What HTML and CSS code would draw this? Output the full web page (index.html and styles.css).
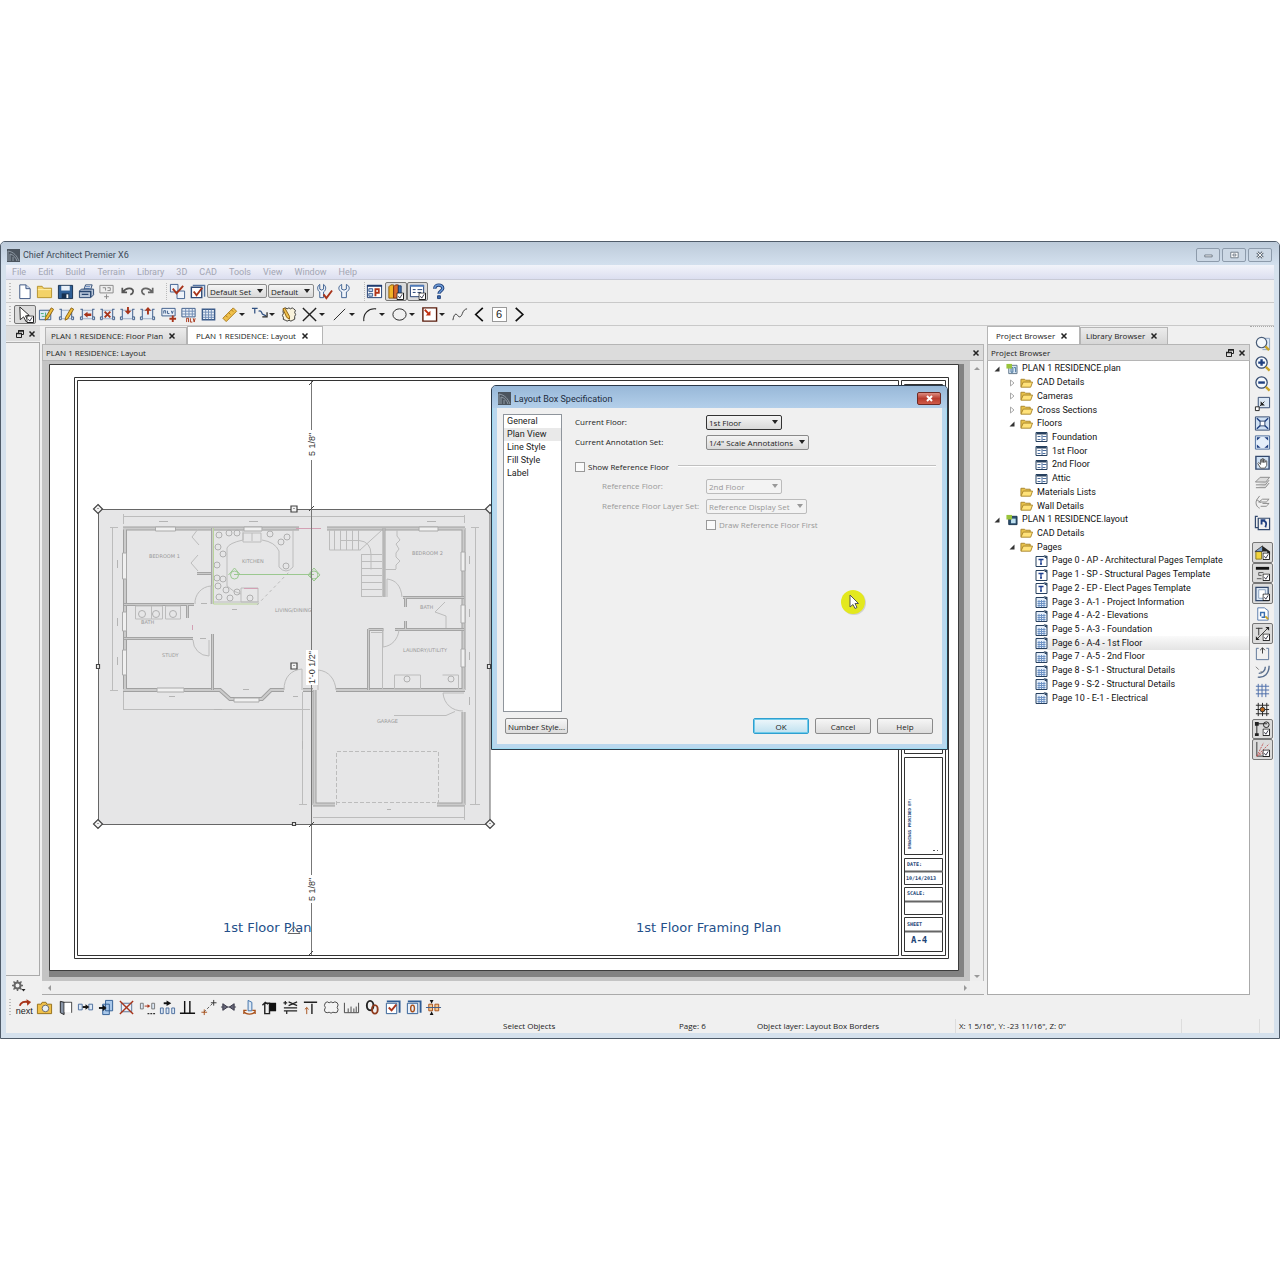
FILE: index.html
```html
<!DOCTYPE html>
<html lang="en">
<head>
<meta charset="utf-8">
<title>Chief Architect Premier X6</title>
<link rel="stylesheet" href="styles.css">
</head>
<body>
<svg class="defs" aria-hidden="true">
  <symbol id="folder" viewBox="0 0 14 12"><path d="M1 10V2h4l1 1h5v2" fill="#e8c24a" stroke="#a8842a"/><path d="M1 10.500l2.500-5.500h10l-2 5.500z" fill="#ffe27a" stroke="#a8842a"/></symbol>
  <symbol id="plan" viewBox="0 0 12 12"><path d="M.5 1.500h11v9H.5z" fill="#fff" stroke="#27405f"/><path d="M1 2.500h10" stroke="#27405f" stroke-width="2"/><path d="M2 5.500h3M2 8.500h3M6.500 4v6M7 5.500h4M7 8.500h3" stroke="#4a6c9c"/></symbol>
  <symbol id="sheet" viewBox="0 0 12 12"><path d="M.5 1.500h8l3 2v8H.5z" fill="#e4eefa" stroke="#27405f"/><path d="M8 0l4 4V1z" fill="#27405f"/><path d="M2 5.500h8M2 7.500h8M2 9.500h8M3.500 4v7M6 4v7M8.500 4v7" stroke="#6f93c4"/></symbol>
  <symbol id="tmpl" viewBox="0 0 12 12"><path d="M.5 1.500h8l3 2v8H.5z" fill="#fff" stroke="#27405f"/><path d="M8 0l4 4V1z" fill="#27405f"/><path d="M3 4.500h5M5.500 4v5M4.500 9h2" stroke="#1d3f8f" stroke-width="1.300"/></symbol>
  <symbol id="file" viewBox="0 0 13 13"><path d="M3.500 2.500h9v9h-9z" fill="#dbe8f5" stroke="#5b7186"/><path d="M6 5h2v5H6zM9 5h2v5" fill="none" stroke="#3d6d96"/><path d="M1 1h6v5H1z" fill="#9ac43c"/></symbol>
  <symbol id="filed" viewBox="0 0 13 13"><path d="M3.500 2.500h9v9h-9z" fill="#2c5170" stroke="#18324c"/><path d="M6 5h5v5H6z" fill="#bfe0f0"/><path d="M1 1h6v5H1z" fill="#9ac43c"/></symbol>
  <symbol id="open" viewBox="0 0 8 8"><path d="M6.500 1.500v5h-5z" fill="#333"/></symbol>
  <symbol id="shut" viewBox="0 0 8 8"><path d="M2.500 1l3.500 3-3.500 3z" fill="#fff" stroke="#aaa"/></symbol>
  <symbol id="x" viewBox="0 0 8 8"><path d="M1.500 1.500l5 5M6.500 1.500l-5 5" stroke="#222" stroke-width="1.500"/></symbol>
  <symbol id="restore" viewBox="0 0 8 8"><path d="M2.500 3V.5h5v4H6M.5 3.500h5v4h-5z" fill="none" stroke="#222"/><path d="M2 1h6M0 3.500h6" stroke="#222" stroke-width="1.500"/></symbol>
  <symbol id="logo" viewBox="0 0 13 13"><path d="M0 0h13v13H0z" fill="#4b545e"/><path d="M1 12V2c6 1 9 5 11 10M3 12V5c4 1 6 4 7 7M6 12V8" fill="none" stroke="#8f9aa5"/></symbol>
  <symbol id="scroll" viewBox="0 0 18 18"><path d="M3.500 4.500h11v9h-11z" fill="#e4ecf6"/><path d="M4 4.500h10M4 13.500h10" stroke="#9aabc4"/><path d="M3.500 3v11.500h-2v-3h2M14.500 3v11.500h2v-3h-2M3.500 3.500h-2M14.500 3.500h2" fill="none" stroke="#3b5b89"/></symbol>
  <symbol id="tick" viewBox="0 0 8 8"><path d="M.5.500h7v7h-7z" fill="#fff" stroke="#111"/><path d="M2 4l1.500 2L6 2" fill="none" stroke="#334"/></symbol>
</svg>

<main class="window">
  <header class="titlebar">
    <svg class="logo"><use href="#logo"/></svg><h1>Chief Architect Premier X6</h1>
    <div class="winbtns">
      <button aria-label="Minimize"><svg viewBox="0 0 22 13"><path d="M7.500 6.500h8v2h-8z" fill="#fff" stroke="#6b7682"/></svg></button>
      <button aria-label="Maximize"><svg viewBox="0 0 22 13"><path d="M7.500 3.500h8v6h-8z" fill="#fff" stroke="#6b7682"/><path d="M10 5.500h3v2h-3z" fill="none" stroke="#6b7682"/></svg></button>
      <button aria-label="Close"><svg viewBox="0 0 22 13"><path d="M8 3.500l6 6M14 3.500l-6 6" stroke="#6b7682" stroke-width="3"/><path d="M8 3.500l6 6M14 3.500l-6 6" stroke="#fff"/></svg></button>
    </div>
  </header>
  <div class="body">
  <nav class="menu"><a href="#">File</a><a href="#">Edit</a><a href="#">Build</a><a href="#">Terrain</a><a href="#">Library</a><a href="#">3D</a><a href="#">CAD</a><a href="#">Tools</a><a href="#">View</a><a href="#">Window</a><a href="#">Help</a></nav>

  <div class="bar bar1">
    <div class="icons seven">
      <button aria-label="New"><svg viewBox="0 0 18 18"><path d="M4 2h6.500L15 6v10.500H4z" fill="#fff" stroke="#39537f"/><path d="M10.500 2v4H15" fill="#cfdcee" stroke="#39537f"/></svg></button>
      <button aria-label="Open"><svg viewBox="0 0 18 18"><path d="M1.500 3.500h5l1.500 2h8.500v10h-15z" fill="#f3d267" stroke="#b5902c"/><path d="M2 7h14" stroke="#fff0b0"/></svg></button>
      <button aria-label="Save"><svg viewBox="0 0 18 18"><path d="M1.500 2.500h15v14h-15z" fill="#2f5f96" stroke="#17304f"/><path d="M4.500 3h9v5h-9z" fill="#e9f0f8"/><path d="M5 11h8v5H5z" fill="#17304f"/><path d="M10 12h2v4h-2z" fill="#fff"/></svg></button>
      <button aria-label="Print"><svg viewBox="0 0 18 18"><path d="M6 8l2-6h7l-2 6" fill="#fff" stroke="#27456f"/><path d="M8 4h5M7.500 6h5" stroke="#3a66a8"/><path d="M1.500 8.500l2-2h13v6l-3 3h-12z" fill="#b8c6d8" stroke="#27456f"/><path d="M1.500 9h12v6M4 12h7" fill="none" stroke="#27456f" stroke-width="1.500"/></svg></button>
      <button aria-label="Send to layout"><svg viewBox="0 0 18 18"><path d="M2 2.500h14v8H2z" fill="#eee" stroke="#888"/><path d="M5 5h3v3M10 5h3v3h-3M9 12v5M6.500 14.500h5" fill="none" stroke="#888"/></svg></button>
      <button aria-label="Undo"><svg viewBox="0 0 18 18"><path d="M3.500 5v5h5M4.500 9C8 4 15 5 15 9c0 1.500-1 2.500-3 3.500" fill="none" stroke="#555" stroke-width="1.800"/></svg></button>
      <button aria-label="Redo"><svg viewBox="0 0 18 18"><path d="M14.500 5v5h-5M13.500 9C10 4 3 5 3 9c0 1.500 1 2.500 3 3.500" fill="none" stroke="#666" stroke-width="1.800"/></svg></button>
    </div>
    <div class="icons two">
      <button aria-label="Defaults"><svg viewBox="0 0 18 18"><path d="M1.500 1.500h8v8h-8zM8.500 8.500h8v8h-8z" fill="#eef3fa" stroke="#3f5f8f"/><path d="M4 6l4 5 7-8" fill="none" stroke="#a8341a" stroke-width="2"/></svg></button>
      <button aria-label="Preferences"><svg viewBox="0 0 18 18"><path d="M4 2.500h12.500v12" fill="none" stroke="#5474a3" stroke-width="1.500"/><path d="M2.500 4.500h11v11h-11z" fill="#fff" stroke="#2f4a77" stroke-width="1.500"/><path d="M5 9l3 4 6-8" fill="none" stroke="#a8341a" stroke-width="2"/></svg></button>
    </div>
    <span class="sel w60"><select aria-label="Default set"><option>Default Set</option></select></span>
    <span class="sel w46"><select aria-label="Layer set"><option>Default</option></select></span>
    <div class="icons two">
      <button aria-label="Edit tools"><svg viewBox="0 0 18 18"><path d="M4 1.500v5l2 1 2-1v-5c3 2 3 6 0 8v6H4v-6C1 7.500 1 3.500 4 1.500z" fill="#eef3fa" stroke="#3b5f8f"/><path d="M8 12l3 4 6-8" fill="none" stroke="#a8341a" stroke-width="2"/></svg></button>
      <button aria-label="Tools"><svg viewBox="0 0 18 18"><path d="M6 1.500v5l2.500 1 2.500-1v-5c4 2 4 6 0 8v6H6v-6C2 7.500 2 3.500 6 1.500z" fill="#eef3fa" stroke="#3b5f8f"/></svg></button>
    </div>
    <div class="icons four">
      <button aria-label="Project browser"><svg viewBox="0 0 18 18"><path d="M1.500 2.500h15v13h-15z" fill="#fff" stroke="#1f3b6e"/><path d="M1 3h16" stroke="#1f3b6e" stroke-width="2"/><path d="M3 6h4v3H3zM3 11h4v3H3z" fill="#c4d5ea" stroke="#3d5f94"/><path d="M10 14V6.500h3.500v4H10" fill="none" stroke="#b03418" stroke-width="2"/></svg></button>
      <button class="on" aria-label="Library browser"><svg viewBox="0 0 18 18"><path d="M2 4l2-2h3v14H2z" fill="#f0b428" stroke="#8a5a10"/><path d="M7 4l2-2h3v14H7z" fill="#d9692a" stroke="#7a2f10"/><path d="M12 3h3v13h-3z" fill="#4676b5" stroke="#1d3c6b"/><use href="#tick" x="10" y="10" width="8" height="8"/></svg></button>
      <button class="on" aria-label="Active view"><svg viewBox="0 0 18 18"><path d="M1.500 2.500h14v12h-14z" fill="#fff" stroke="#1f3b6e"/><path d="M1 3h15" stroke="#4f7ab8" stroke-width="2"/><path d="M4 7h3M4 10h3M9 7h5M9 10h4" stroke="#1f3b6e"/><use href="#tick" x="10" y="10" width="8" height="8"/></svg></button>
      <button aria-label="Help"><svg viewBox="0 0 18 18"><path d="M5 6c0-5 8.500-5 8.500-.5 0 3-4 3-4 6" fill="none" stroke="#203f78" stroke-width="3.500"/><path d="M5 6c0-5 8.500-5 8.500-.5 0 3-4 3-4 6" fill="none" stroke="#6d9bd8" stroke-width="1.500"/><path d="M8 13.500h3v3H8z" fill="#3f6fb0" stroke="#203f78"/></svg></button>
    </div>
  </div>

  <div class="bar bar2">
    <div class="icons ten">
      <button class="on" aria-label="Select objects"><svg viewBox="0 0 18 18"><path d="M3 1l10 9-4 .5 2.500 5-2 1-2.500-5-3.500 3z" fill="#fff" stroke="#222"/><use href="#tick" x="10" y="10" width="8" height="8"/></svg></button>
      <button aria-label="Edit layout lines"><svg viewBox="0 0 18 18"><path d="M1.500 4.500h12v10h-12z" fill="#dce8f5" stroke="#3b5b89"/><path d="M3 8h3M4 11h3M8 7v5" stroke="#4a7"/><path d="M8 12l6-10 2.500 1.500-6 10-3 1.500z" fill="#f0bf3c" stroke="#8a6010"/></svg></button>
      <button aria-label="Edit layout page"><svg viewBox="0 0 18 18"><use href="#scroll"/><path d="M8 12l6-10 2.500 1.500-6 10-3 1.500z" fill="#f0bf3c" stroke="#8a6010"/></svg></button>
      <button aria-label="Previous sheet"><svg viewBox="0 0 18 18"><use href="#scroll"/><path d="M5 9l4-3v2h4v2.500H9v2z" fill="#a8341a"/></svg></button>
      <button aria-label="Delete sheet"><svg viewBox="0 0 18 18"><use href="#scroll"/><path d="M6 6l6 6M12 6l-6 6" stroke="#a8341a" stroke-width="2"/></svg></button>
      <button aria-label="Import sheet"><svg viewBox="0 0 18 18"><use href="#scroll"/><path d="M9.500 1v5" stroke="#a8341a" stroke-width="2"/><path d="M6 5h7l-3.500 4z" fill="#a8341a"/></svg></button>
      <button aria-label="Export sheet"><svg viewBox="0 0 18 18"><use href="#scroll"/><path d="M9.500 9V4" stroke="#a8341a" stroke-width="2"/><path d="M6 5h7L9.500 1z" fill="#a8341a"/></svg></button>
      <button aria-label="Add revision"><svg viewBox="0 0 18 18"><path d="M2 2.500h14v8H2z" fill="#eaf0f8" stroke="#3b5b89"/><path d="M4 8V5h2v3M8 5v3h2M12 5l1 3 1-3" fill="none" stroke="#3b5b89"/><path d="M13.500 10v7M10 13.500h7" stroke="#a8341a" stroke-width="2"/></svg></button>
      <button aria-label="Revision table"><svg viewBox="0 0 18 18"><path d="M2 2.500h14v9H2z" fill="#eaf0f8" stroke="#3b5b89"/><path d="M2 5.500h14M2 8.500h14M6 3v8M9.500 3v8M13 3v8" stroke="#6f8bb4"/><path d="M7 17v-4h2v4M11 13v4h2M14 13l1 4 1-4" fill="none" stroke="#a8341a"/></svg></button>
      <button aria-label="Page table"><svg viewBox="0 0 18 18"><path d="M2.500 3.500h13v11h-13z" fill="#eaf0f8" stroke="#3b5b89" stroke-width="1.500"/><path d="M3 6.500h12M3 9.500h12M3 12h12M6 4v10M9 4v10M12 4v10" stroke="#6f8bb4"/></svg></button>
    </div>
    <div class="icons splits">
      <button class="split" aria-label="Dimensions"><svg viewBox="0 0 18 18"><path d="M2 13L13 2l3.500 3.500-11 11z" fill="#f0c04a" stroke="#a87818"/><path d="M5 10l2 2M8 7l2 2M11 4l2 2" stroke="#a87818"/></svg></button>
      <button class="split" aria-label="Text"><svg viewBox="0 0 18 18"><path d="M1 2.500h6M4 2v6M8 5.500c2-1 3 0 4 3l4 2" fill="none" stroke="#2f4f80" stroke-width="1.300"/><path d="M17 6.500v5h-5" fill="none" stroke="#222" stroke-width="1.300"/></svg></button>
      <button aria-label="Revision cloud"><svg viewBox="0 0 18 18"><path d="M3 3q2-2 3.500 0 2-2 3.500 0 2-2 3.500 0 3 1 1 4 2 2 0 4 1 4-2 4-2 2-4 0-2 2-4 0-3 0-2-3-2-2 0-4-1-3 .5-5z" fill="#f8f2dc" stroke="#333"/><path d="M2 3l2-1 5 9v3l-3-2z" fill="#f0c04a" stroke="#8a6010"/></svg></button>
      <button class="split" aria-label="Point"><svg viewBox="0 0 18 18"><path d="M2 2l14 14M16 2L2 16" stroke="#222" stroke-width="1.500"/></svg></button>
      <button class="split" aria-label="Line"><svg viewBox="0 0 18 18"><path d="M3 15L15 3" stroke="#222"/></svg></button>
      <button class="split" aria-label="Arc"><svg viewBox="0 0 18 18"><path d="M3 16C2 8 8 2 16 3" fill="none" stroke="#222" stroke-width="1.200"/></svg></button>
      <button class="split" aria-label="Circle"><svg viewBox="0 0 18 18"><ellipse cx="9" cy="9" rx="7" ry="6" fill="none" stroke="#222"/></svg></button>
      <button class="split" aria-label="Box"><svg viewBox="0 0 18 18"><path d="M2 2h14.500v14H2z" fill="#fff" stroke="#5a1c0c" stroke-width="1.500"/><path d="M4 4l4 4" stroke="#c03010" stroke-width="2"/><path d="M10 5v5H5z" fill="#c03010"/></svg></button>
      <button aria-label="Spline"><svg viewBox="0 0 18 18"><path d="M2 15c1-6 3-8 5-5s4 1 5-2 3-5 5-5" fill="none" stroke="#333"/></svg></button>
      <button aria-label="Previous page"><svg viewBox="0 0 18 18"><path d="M12.500 2L5 9l7.500 7" fill="none" stroke="#111" stroke-width="1.800"/></svg></button>
      <button aria-label="Page 6"><span class="pageno">6</span></button>
      <button aria-label="Next page"><svg viewBox="0 0 18 18"><path d="M5 2l7.500 7L5 16" fill="none" stroke="#111" stroke-width="1.800"/></svg></button>
    </div>
  </div>

  <div class="work">
    <aside class="dock">
      <div class="dockhead"><svg class="s8"><use href="#restore"/></svg><svg class="s8"><use href="#x"/></svg></div>
      <div class="dockbody"></div>
      <button class="gear" aria-label="Options"><svg viewBox="0 0 14 12"><circle cx="5.500" cy="5.500" r="3" fill="none" stroke="#666" stroke-width="2"/><path d="M5.500 0v2M5.500 9v2M0 5.500h2M9 5.500h2M1.500 1.500l1.500 1.500M8 8l1.500 1.500M1.500 9.500L3 8M8 3l1.500-1.500" stroke="#666" stroke-width="1.500"/><path d="M9.500 9h4l-2 2.500z" fill="#222"/></svg></button>
    </aside>

    <section class="center">
      <div class="tabs">
        <button class="tab tab-a">PLAN 1 RESIDENCE: Floor Plan<svg class="s8"><use href="#x"/></svg></button>
        <button class="tab tab-b active">PLAN 1 RESIDENCE: Layout<svg class="s8"><use href="#x"/></svg></button>
      </div>
      <div class="panelhead"><span>PLAN 1 RESIDENCE: Layout</span><svg class="s8"><use href="#x"/></svg></div>
      <div class="viewport">
        <svg class="drawing" viewBox="42 361 928 620">
          <defs>
            <path id="walls" d="M123 528.500h176M327 528.500h138M125 528v162M463.500 528v67M463.500 595v95M463.500 712v93M123 690h97l10 9h32l9-9h13M303 690h10M336 690h129M314.500 690v115M313 804.500h22M437 804.500h28"/>
            <path id="inner" d="M124 604.500h70M212.500 528v76M124 638.500h69M212.500 634v56M197 573.500h14M384 528v69M403 597.500h61M405.500 598v9M405.500 621v8M368.500 629.500h15M395 629.500h69M368.500 629v61M187.500 605v13"/>
          </defs>
          <path d="M42 361h928v620H42z" fill="#c4c4c4"/>
          <path d="M49 364h915v613H49z" fill="#828282"/>
          <path d="M49.500 364.500h909v606h-909z" fill="#fff" stroke="#3c3c3c"/>
          <g fill="none" stroke="#333">
            <path d="M74.500 377.500h874v581h-874zM77.500 380.500h821v575h-821zM901.500 380.500h44v575h-44z"/>
            <path d="M904.500 384.500h38v369h-38zM904.500 757.500h38v97h-38zM904.500 858.500h38v26h-38zM904.500 887.500h38v27h-38zM904.500 917.500h38v34h-38z"/>
            <path d="M905 871.500h38M905 901.500h38M905 931.500h38" stroke="#666" stroke-width="2"/>
          </g>
          <g class="tb"><text x="907" y="866">DATE:</text><text x="906" y="880">10/14/2013</text><text x="907" y="895">SCALE:</text><text x="907" y="926">SHEET</text><text x="911" y="943" class="tbig">A-4</text><text transform="translate(911 849) rotate(-90)" class="tsm">DRAWINGS PROVIDED BY:</text><path d="M933 850.500h2M937 850.500h1" stroke="#555"/></g>

          <path d="M98.500 509.500h391.500v315h-391.500z" fill="#e6e6e7" stroke="#666"/>
          <g fill="none">
            <use href="#walls" stroke="#a0a0a0" stroke-width="4"/>
            <use href="#walls" stroke="#cbcbcb" stroke-width="2"/>
            <use href="#inner" stroke="#a4a4a4" stroke-width="3"/>
            <use href="#inner" stroke="#cbcbcb" stroke-width="1"/>
            <path d="M155.500 527h20v4h-20zM244 527h18v4h-18zM419 527h19v4h-19zM122.500 553h4v26h-4zM122.500 612h4v19h-4zM122.500 650h4v25h-4zM461 552h4v19h-4zM461 605h4v18h-4zM461 649h4v18h-4zM157 688h27v4h-27zM234 698h25v4h-25z" fill="#f0f0f0" stroke="#aaa"/>
            <g stroke="#bcbcbc">
              <path d="M123 516.500h341M112.500 527v164M123 709.500h187M302.500 692v113M313 817.500h151M475.500 527v278M123.500 514v10M464.500 515v8M110 527.500h8M110 690.500h8M123.500 692v18M464.500 806v14M471 527.500h8M470 804.500h10M299 804.500h8"/>
              <path d="M195 604a17 17 0 0 1 16-18v18M193 640a16 16 0 0 0 16 16v-16M284 690c0-13 7-20 18-21v21M318 690v-20c11 1 17 9 18 20M387 597v-18c9 1 14 7 15 18M383 629v18c9-1 15-8 16-17M464 693h-21c1 11 9 18 20 18"/>
              <path d="M198 529l-6 8 7 8M198 555l-7 8 7 8M396 569.500h-11M397 530v6l3 4-4 4 3 5-3 4v4l4 4-4 4v4"/>
              <path d="M329.500 530v20h31M334.500 530v20M340.500 530v20M346.500 530v20M352.500 530v20M358.500 530v20M341 540.500h18q12 1 12 14v15M360 550l22-20M361.500 554v42M361 554.500h21M361 561.500h21M361 568.500h21M361 575.500h21M361 582.500h21M361 589.500h21M361 596.500h21"/>
              <path d="M214 530h29v10q-14 3-16 8v38q6 6 14 8M262 530h31v37q-7 8-14 0v-16q-4-9-17-11M241 588h17v14h-17zM214 602h45M243 533h18v9h-18zM252 533v8"/>
              <path d="M135.500 606h16v13h-16zM151.500 606h11v13h-11zM165.500 606h15v13h-15zM445 602l-10 10 11 4v12M382.500 631v58M371 632.500h12M394.500 675h26v14h-26zM442.500 675h16v14"/>
              <path d="M336.500 805v-53.500h102v53.500M336 802.500h102" stroke-dasharray="4 2"/><path d="M394 715.500h52l9-4"/>
            </g>
            <g stroke="#b0b0b0"><circle cx="219" cy="535" r="3"/><circle cx="229" cy="533" r="3"/><circle cx="237" cy="533" r="3"/><circle cx="218" cy="547" r="3"/><circle cx="223" cy="554" r="3"/><circle cx="217" cy="565" r="3"/><circle cx="217" cy="578" r="3"/><circle cx="223" cy="579" r="3"/><circle cx="218" cy="586" r="3"/><circle cx="219" cy="597" r="3"/><circle cx="226" cy="590" r="3"/><circle cx="230" cy="598" r="3"/><circle cx="237" cy="592" r="3"/><circle cx="250" cy="598" r="3"/><circle cx="270" cy="534" r="3"/><circle cx="281" cy="542" r="3"/><circle cx="287" cy="537" r="3"/><circle cx="286" cy="566" r="3"/><circle cx="142" cy="614" r="3.500"/><circle cx="156" cy="614" r="3.500"/><circle cx="173" cy="614" r="3.500"/><circle cx="407" cy="679" r="3"/><circle cx="451" cy="679" r="3"/></g>
            <path d="M213.500 528v76h45" stroke="#b9d49a"/><path d="M257 605l33-34" stroke="#bbb" stroke-dasharray="3 3"/>
            <path d="M296 528.500h25M244 588.500h14M192.500 625v5" stroke="#d3a0b4"/>
            <g stroke="#9bc890"><path d="M234 574.500h80"/><circle cx="234.500" cy="575" r="4"/><circle cx="314" cy="575" r="4"/><path d="M234.500 568l6 7M234.500 568l-6 7M314 568l6 7-6 6-6-6z"/></g>
          </g>
          <g class="room"><text x="149" y="558">BEDROOM 1</text><text x="242" y="563">KITCHEN</text><text x="275" y="612">LIVING/DINING</text><text x="141" y="624">BATH</text><text x="162" y="657">STUDY</text><text x="412" y="555">BEDROOM 2</text><text x="420" y="609">BATH</text><text x="403" y="652">LAUNDRY/UTILITY</text><text x="377" y="723">GARAGE</text></g>
          <path d="M159 521.500h9M249 521.500h9M427 521.500h9M117.500 560v8M117.500 618v8M117.500 657v8M469.500 556v8M469.500 609v8M469.500 652v8M469.500 697v8M169 696.500h6M243 689.500h6M293 696.500h5M214 709.500h8M232 609.500h5M201 603.500h6M200 638.500h6M302.500 741v8M387 809.500h4" stroke="#b4b4b4"/>

          <g fill="none" stroke="#777"><path d="M311.500 381v49M311.500 460v190M311.500 685v190M311.500 903v52"/><path d="M309 511l5-5M309 827l5-5M309 385l4-4M309 955l4-4" stroke="#444"/></g>
          <path d="M306 650h12v35h-12z" fill="#fff"/>
          <g class="dim"><text transform="translate(315 456) rotate(-90)">5 1/8"</text><text transform="translate(315 684) rotate(-90)">1'-0 1/2"</text><text transform="translate(315 901) rotate(-90)">5 1/8"</text></g>
          <g class="caption"><text x="223" y="932">1st Floor Plan</text><text x="636" y="932">1st Floor Framing Plan</text></g>
          <path d="M288 933.500h12l-6-7z" fill="none" stroke="#666"/>
          <g fill="#f4f4f4" stroke="#444" stroke-width="1.200"><path d="M98 504.500l4.500 4.500-4.500 4.500-4.500-4.500zM490 504.500l4.500 4.500-4.500 4.500-4.500-4.500zM98 819.500l4.500 4.500-4.500 4.500-4.500-4.500zM490 819.500l4.500 4.500-4.500 4.500-4.500-4.500zM291 506h6v6h-6zM291 663h6v6h-6zM96.500 664.500h3v4h-3zM487.500 664.500h3v4h-3zM292.500 822.500h3v3h-3z"/></g>
          <path d="M293.500 508.500h1M293.500 665.500h1M97.500 508.500h1M97.500 823.500h1M489.500 823.500h1" stroke="#444"/>
        </svg>
        <div class="vscroll"><i class="up"></i><i class="down"></i></div>
        <div class="hscroll"><i class="left"></i><i class="right"></i></div>

        <form class="dialog" role="dialog" aria-labelledby="dt">
          <div class="dtitle"><svg class="logo"><use href="#logo"/></svg><h2 id="dt">Layout Box Specification</h2><button type="button" class="close" aria-label="Close"><svg viewBox="0 0 22 11"><path d="M9 3l5 5M14 3L9 8" stroke="#fff" stroke-width="2"/></svg></button></div>
          <div class="dbody">
            <div class="dmain">
              <ul class="plist"><li>General</li><li class="cur">Plan View</li><li>Line Style</li><li>Fill Style</li><li>Label</li></ul>
              <div class="fields">
                <div class="row"><label for="cf">Current Floor:</label><span class="sel dark w76"><select id="cf"><option>1st Floor</option></select></span></div>
                <div class="row"><label for="ca">Current Annotation Set:</label><span class="sel w103"><select id="ca"><option>1/4" Scale Annotations</option></select></span></div>
                <div class="group"><input type="checkbox" id="sr"><label for="sr">Show Reference Floor</label><hr></div>
                <div class="row sub off"><label for="rf">Reference Floor:</label><span class="sel w76"><select id="rf" disabled><option>2nd Floor</option></select></span></div>
                <div class="row sub off"><label for="rl">Reference Floor Layer Set:</label><span class="sel w101"><select id="rl" disabled><option>Reference Display Set</option></select></span></div>
                <div class="first off"><input type="checkbox" id="dr" disabled><label for="dr">Draw Reference Floor First</label></div>
              </div>
            </div>
            <div class="dfoot"><button type="button" class="btn num">Number Style...</button><button type="button" class="btn ok">OK</button><button type="button" class="btn">Cancel</button><button type="button" class="btn">Help</button></div>
          </div>
          <svg class="cursor" viewBox="0 0 28 28"><circle cx="15" cy="15" r="12" fill="#999" opacity=".35"/><circle cx="14" cy="14" r="12" fill="#e3e81e"/><path d="M11 7v12l3-2.500 2 4 2-1-2-4h3.500z" fill="#fff" stroke="#555"/></svg>
        </form>
      </div>
    </section>

    <section class="browser">
      <div class="tabs">
        <button class="tab tab-c active">Project Browser<svg class="s8"><use href="#x"/></svg></button>
        <button class="tab tab-d">Library Browser<svg class="s8"><use href="#x"/></svg></button>
      </div>
      <div class="panelhead"><span>Project Browser</span><svg class="s8"><use href="#restore"/></svg><svg class="s8"><use href="#x"/></svg></div>
      <div class="treebox"><ul class="tree">
        <li class="l0"><svg class="tw"><use href="#open"/></svg><svg class="ti"><use href="#file"/></svg>PLAN 1 RESIDENCE.plan</li>
        <li class="l1"><svg class="tw"><use href="#shut"/></svg><svg class="ti"><use href="#folder"/></svg>CAD Details</li>
        <li class="l1"><svg class="tw"><use href="#shut"/></svg><svg class="ti"><use href="#folder"/></svg>Cameras</li>
        <li class="l1"><svg class="tw"><use href="#shut"/></svg><svg class="ti"><use href="#folder"/></svg>Cross Sections</li>
        <li class="l1"><svg class="tw"><use href="#open"/></svg><svg class="ti"><use href="#folder"/></svg>Floors</li>
        <li class="l2"><svg class="ti"><use href="#plan"/></svg>Foundation</li>
        <li class="l2"><svg class="ti"><use href="#plan"/></svg>1st Floor</li>
        <li class="l2"><svg class="ti"><use href="#plan"/></svg>2nd Floor</li>
        <li class="l2"><svg class="ti"><use href="#plan"/></svg>Attic</li>
        <li class="l1"><svg class="tw"></svg><svg class="ti"><use href="#folder"/></svg>Materials Lists</li>
        <li class="l1"><svg class="tw"></svg><svg class="ti"><use href="#folder"/></svg>Wall Details</li>
        <li class="l0"><svg class="tw"><use href="#open"/></svg><svg class="ti"><use href="#filed"/></svg>PLAN 1 RESIDENCE.layout</li>
        <li class="l1"><svg class="tw"></svg><svg class="ti"><use href="#folder"/></svg>CAD Details</li>
        <li class="l1"><svg class="tw"><use href="#open"/></svg><svg class="ti"><use href="#folder"/></svg>Pages</li>
        <li class="l2"><svg class="ti"><use href="#tmpl"/></svg>Page 0 - AP - Architectural Pages Template</li>
        <li class="l2"><svg class="ti"><use href="#tmpl"/></svg>Page 1 - SP - Structural Pages Template</li>
        <li class="l2"><svg class="ti"><use href="#tmpl"/></svg>Page 2 - EP - Elect Pages Template</li>
        <li class="l2"><svg class="ti"><use href="#sheet"/></svg>Page 3 - A-1 - Project Information</li>
        <li class="l2"><svg class="ti"><use href="#sheet"/></svg>Page 4 - A-2 - Elevations</li>
        <li class="l2"><svg class="ti"><use href="#sheet"/></svg>Page 5 - A-3 - Foundation</li>
        <li class="l2 cur"><svg class="ti"><use href="#sheet"/></svg>Page 6 - A-4 - 1st Floor</li>
        <li class="l2"><svg class="ti"><use href="#sheet"/></svg>Page 7 - A-5 - 2nd Floor</li>
        <li class="l2"><svg class="ti"><use href="#sheet"/></svg>Page 8 - S-1 - Structural Details</li>
        <li class="l2"><svg class="ti"><use href="#sheet"/></svg>Page 9 - S-2 - Structural Details</li>
        <li class="l2"><svg class="ti"><use href="#sheet"/></svg>Page 10 - E-1 - Electrical</li>
      </ul></div>
    </section>

    <div class="side">
      <div class="vicons g10">
        <button aria-label="Zoom"><svg viewBox="0 0 18 18"><path d="M9 3.500h7.500v12H9" fill="#dce8f5" stroke="#8aa0bd"/><circle cx="8" cy="8" r="5.500" fill="#f4f8fc" stroke="#4a5d78" stroke-width="1.300"/><path d="M12 12l4 4" stroke="#c9a326" stroke-width="2.500"/></svg></button>
        <button aria-label="Zoom in"><svg viewBox="0 0 18 18"><circle cx="8" cy="8" r="6" fill="#f4f8fc" stroke="#33496e" stroke-width="1.300"/><path d="M12.500 12.500l4 4" stroke="#c9a326" stroke-width="2.500"/><path d="M8 4.500v7M4.500 8h7" stroke="#1f3f80" stroke-width="2.500"/></svg></button>
        <button aria-label="Zoom out"><svg viewBox="0 0 18 18"><circle cx="8" cy="8" r="6" fill="#f4f8fc" stroke="#33496e" stroke-width="1.300"/><path d="M12.500 12.500l4 4" stroke="#c9a326" stroke-width="2.500"/><path d="M4.500 8h7" stroke="#1f3f80" stroke-width="2.500"/></svg></button>
        <button aria-label="Undo zoom"><svg viewBox="0 0 18 18"><path d="M4.500 2.500h12v11h-12z" fill="#dce8f5" stroke="#33496e"/><path d="M1.500 12.500h4v4h-4z" fill="#fff" stroke="#222"/><path d="M6 12l5-5" stroke="#222"/><path d="M7 6.500v4.500h4.500z" fill="#222"/></svg></button>
        <button aria-label="Fill window"><svg viewBox="0 0 18 18"><path d="M1.500 2h15v14h-15z" fill="#cfe0f3" stroke="#33496e"/><path d="M3 3.500l12 11M15 3.500l-12 11" stroke="#1f3f80" stroke-width="1.500"/><path d="M6.500 6.500h5v5h-5z" fill="#fff" stroke="#33496e"/></svg></button>
        <button aria-label="Fill building"><svg viewBox="0 0 18 18"><path d="M1.500 2h15v14h-15z" fill="#e4eefa" stroke="#4a6c9c"/><path d="M3 7V3.500h4zM15 7V3.500h-4zM3 11v3.500h4zM15 11v3.500h-4z" fill="#1f3f80"/></svg></button>
        <button aria-label="Pan"><svg viewBox="0 0 18 18"><path d="M2 2.500h14v13.500H2z" fill="#cfe0f3" stroke="#33496e" stroke-width="1.500"/><path d="M7 15l-3-5 1-1 2 2V6h1.500v3V5H10v4V6h1.500v3l1-2 1 .5V12l-2 3z" fill="#fff" stroke="#555"/></svg></button>
        <button aria-label="Layers"><svg viewBox="0 0 18 18"><path d="M1.500 8.500l5-5h10l-4 5zM2 11.500h10l4-5M2 14.500h10l4-5" fill="#ddd" stroke="#888"/></svg></button>
        <button aria-label="Swap layers"><svg viewBox="0 0 18 18"><path d="M9 5.500h7l-3 3H5zM9 10h7l-3 3H7M6 2L3 6l4 3M3 6c-2 4 0 8 3 9" fill="none" stroke="#888"/></svg></button>
        <button aria-label="Refresh"><svg viewBox="0 0 18 18"><path d="M4 2.500H1.500v12H4M4.500 4.500h12v12h-12z" fill="none" stroke="#33496e" stroke-width="1.300"/><path d="M8 11V6.500h4M8 7c5 0 6 3 4 7" fill="none" stroke="#1f3f80" stroke-width="2"/></svg></button>
      </div>
      <div class="vicons g11">
        <button class="on" aria-label="Color"><svg viewBox="0 0 18 18"><path d="M2 8h6v8H2z" fill="#f2d43c" stroke="#8a7a20"/><path d="M1 8l8-6v6z" fill="#7fa3cc" stroke="#444"/><path d="M9 2l8 6H9zM14 8h3v3h-3z" fill="#222"/><use href="#tick" x="9" y="9" width="8" height="8"/></svg></button>
        <button class="on" aria-label="Line weights"><svg viewBox="0 0 18 18"><path d="M2 3.500h14" stroke="#111" stroke-width="3"/><path d="M5 8h5M5 8v3h3M3 14.500h5" fill="none" stroke="#555"/><use href="#tick" x="9" y="9" width="8" height="8"/></svg></button>
        <button class="on" aria-label="Page"><svg viewBox="0 0 18 18"><path d="M2 2.500h13v14H2z" fill="#dce8f5" stroke="#33496e" stroke-width="1.300"/><path d="M5 5h7v9H5z" fill="#fff" stroke="#8aa0bd"/><use href="#tick" x="9" y="9" width="8" height="8"/></svg></button>
        <button aria-label="Print preview"><svg viewBox="0 0 18 18"><path d="M4 3h7l4 3v10H4z" fill="#fff" stroke="#5577aa"/><path d="M7 12V8h4v5H8" fill="none" stroke="#3b6fb0" stroke-width="1.500"/><path d="M12 12l3 3" stroke="#c9a326" stroke-width="2"/></svg></button>
        <button class="on" aria-label="Dimensions display"><svg viewBox="0 0 18 18"><path d="M2 3.500h7M5 3v8M3 15L15 3" stroke="#333"/><path d="M16 2v4l-4-4zM2 12v4h4z" fill="#222"/><use href="#tick" x="9" y="9" width="8" height="8"/></svg></button>
        <button aria-label="Extend"><svg viewBox="0 0 18 18"><path d="M5 3.500H2.500v12h13v-12H13" fill="none" stroke="#5a7396"/><path d="M9 9V3M6.500 5.500L9 3l2.500 2.500" fill="none" stroke="#333"/></svg></button>
        <button aria-label="Arcs"><svg viewBox="0 0 18 18"><path d="M16 3c0 8-5 13-12 12M12 4c0 4-3 7-7 7" fill="none" stroke="#5a7090" stroke-width="1.500"/><path d="M2 4l3 3M7 9l2 1" stroke="#777"/></svg></button>
        <button aria-label="Grid"><svg viewBox="0 0 18 18"><path d="M2 4.500h14M2 8.500h14M2 12.500h14M4.500 2v14M8.500 2v14M12.500 2v14" stroke="#4a6ca8"/></svg></button>
        <button aria-label="Grid snap"><svg viewBox="0 0 18 18"><path d="M2 4.500h14M2 13.500h14M2 9h14M4.500 2v14M9 2v14M13.500 2v14" stroke="#222"/><circle cx="9" cy="9" r="2.500" fill="#b5651d" stroke="#333"/></svg></button>
        <button class="on" aria-label="Object snap"><svg viewBox="0 0 18 18"><path d="M3 16V4h11" fill="none" stroke="#222"/><path d="M1 2h4v4H1zM1 14h4v3H1z" fill="#222"/><circle cx="13" cy="5" r="3" fill="none" stroke="#222"/><use href="#tick" x="9" y="9" width="8" height="8"/></svg></button>
        <button class="on" aria-label="Angle snap"><svg viewBox="0 0 18 18"><path d="M3 1v15h14" fill="none" stroke="#333"/><path d="M3 16L10 2M3 16L16 3M3 16L16 9" stroke="#c25a5a" stroke-dasharray="2 1"/><use href="#tick" x="9" y="9" width="8" height="8"/></svg></button>
      </div>
    </div>
  </div>

  <div class="bar bar3">
    <div class="icons many">
      <button aria-label="Next"><span class="next"><svg viewBox="0 0 18 8"><path d="M4 7c1-4 5-5 9-4" fill="none" stroke="#a8341a" stroke-width="2"/><path d="M11 0l5 3-4 4z" fill="#a8341a"/></svg>next</span></button>
      <button aria-label="Camera"><svg viewBox="0 0 18 18"><path d="M1.500 5.500h4l1-2h4l1 2h5v10h-15z" fill="#f0c04a" stroke="#94701a"/><circle cx="10" cy="10" r="3.500" fill="#e8f0f8" stroke="#666"/></svg></button>
      <button aria-label="Open object"><svg viewBox="0 0 18 18"><path d="M7 3.500h8.500v11" fill="#fff" stroke="#222"/><path d="M3.500 2.500l4 1v13l-4-2z" fill="#8a96a8" stroke="#222"/><path d="M8 4h7v10H8z" fill="#fff"/></svg></button>
      <button aria-label="Move"><svg viewBox="0 0 18 18"><path d="M1.500 5.500h4v6h-4zM12.500 5.500h4v6h-4z" fill="#dce8f5" stroke="#4a6c9c"/><path d="M6 8.500h5" stroke="#111" stroke-width="2"/><path d="M9 5.500l4 3-4 3z" fill="#111"/></svg></button>
      <button aria-label="Copy"><svg viewBox="0 0 18 18"><path d="M8 1.500h7.500v11H8zM5 5.500h7v11H5z" fill="#a9c8ea" stroke="#2f5c94"/><path d="M1 9.500h5" stroke="#111" stroke-width="2"/><path d="M5 6l4 3.500L5 13z" fill="#111"/></svg></button>
      <button aria-label="Delete"><svg viewBox="0 0 18 18"><path d="M3.500 4.500h11v9h-11z" fill="#e8eef6" stroke="#5a7396"/><path d="M2 2l14 14M16 2L2 16" stroke="#a8341a" stroke-width="1.500"/></svg></button>
      <button aria-label="Replicate"><svg viewBox="0 0 18 18"><path d="M1.500 4.500h3v6h-3zM13.500 4.500h3v6h-3z" fill="#dce8f5" stroke="#777"/><path d="M6 7.500h4" stroke="#a8341a"/><path d="M9 15.500h2M12 15.500h2M15 15.500h2" stroke="#333" stroke-width="1.500"/><path d="M9 5.500l3 2-3 2z" fill="#a8341a"/></svg></button>
      <button aria-label="Align"><svg viewBox="0 0 18 18"><path d="M1.500 9.500h3v6h-3zM7.500 9.500h3v6h-3zM13.500 9.500h3v6h-3z" fill="#dce8f5" stroke="#4a6c9c"/><path d="M5 4.500h4" stroke="#111" stroke-width="2"/><path d="M8 1.500l5 3-5 3z" fill="#111"/></svg></button>
      <button aria-label="Center"><svg viewBox="0 0 18 18"><path d="M6 2v13M11.500 2v13M1 15h16" stroke="#111" stroke-width="1.500"/></svg></button>
      <button aria-label="Point to point"><svg viewBox="0 0 18 18"><path d="M4 14L14 4" stroke="#555" stroke-dasharray="3 2"/><path d="M14.500 1v6M11.500 4h6" stroke="#333"/><path d="M4.500 11v6M1.500 14h6" stroke="#a8501a"/></svg></button>
      <button aria-label="Make parallel"><svg viewBox="0 0 18 18"><path d="M1 8.500h16" stroke="#445"/><path d="M3 5l5 3.500L3 12zM15 5l-5 3.500 5 3.500z" fill="#667" stroke="#334"/></svg></button>
      <button aria-label="Rotate"><svg viewBox="0 0 18 18"><path d="M7.500 1.500l4 2v9h-4z" fill="#dce8f5" stroke="#3b6fa8"/><path d="M3 13c2 4 10 4 12 0M3 16v-4h3M15 16v-4h-3" fill="none" stroke="#a8501a" stroke-width="1.300"/></svg></button>
      <button aria-label="Reflect"><svg viewBox="0 0 18 18"><path d="M4 4.500h5v11H4zM1.500 6.500l3-3 3 2" fill="none" stroke="#222" stroke-width="1.500"/><path d="M9 4h7v9H9z" fill="#111"/></svg></button>
      <button aria-label="Trim"><svg viewBox="0 0 18 18"><path d="M2 9.500h14M2 12.500h14M5 12v4M7 3l9 4M7 7l9-4M3.500 2v4M1.500 4h4" stroke="#222" stroke-width="1.300"/></svg></button>
      <button aria-label="Extend object"><svg viewBox="0 0 18 18"><path d="M2 3.500h14M10.500 5v11" stroke="#222" stroke-width="1.500"/><path d="M5 16V9M3 11l2-2 2 2" fill="none" stroke="#a8501a"/></svg></button>
      <button aria-label="Bumpout"><svg viewBox="0 0 18 18"><path d="M2.500 4q2-2 4 0 2-2 4 0 2-2 4.500 0 2 2 0 5 2 2 0 5-2 1-4.500 0-2 2-4 0-2 1-4 0-2-2 0-5-2-2 0-5z" fill="#f4f4f4" stroke="#444"/></svg></button>
      <button aria-label="Scale"><svg viewBox="0 0 18 18"><path d="M1.500 4v10.500h15V4M5.500 10v4M8.500 8v6M11.500 10v4M14 8v6" fill="none" stroke="#444"/></svg></button>
      <button aria-label="Link"><svg viewBox="0 0 18 18"><ellipse cx="6.500" cy="7" rx="3.500" ry="5" fill="none" stroke="#222" stroke-width="2"/><ellipse cx="11.500" cy="11" rx="3" ry="4.500" fill="none" stroke="#8f3a1c" stroke-width="2"/></svg></button>
      <button aria-label="Check"><svg viewBox="0 0 18 18"><path d="M3 2.500h13.500v12" fill="none" stroke="#2f5c94" stroke-width="2"/><path d="M2.500 4.500h11v11h-11z" fill="#fff" stroke="#2f5c94"/><path d="M5 9l3 3 5-6" fill="none" stroke="#a8341a" stroke-width="2"/></svg></button>
      <button aria-label="Zero"><svg viewBox="0 0 18 18"><path d="M3 2.500h13.500v12" fill="none" stroke="#2f5c94" stroke-width="2"/><path d="M2.500 4.500h11v11h-11z" fill="#e8f0fa" stroke="#2f5c94"/><ellipse cx="8" cy="10" rx="2" ry="3.500" fill="none" stroke="#a8501a" stroke-width="1.500"/></svg></button>
      <button aria-label="Distribute"><svg viewBox="0 0 18 18"><path d="M4 5.500h4v7H4zM10.500 5.500h4v7h-4z" fill="#f0c890" stroke="#a8501a"/><path d="M1 9h16" stroke="#3b5b89"/><path d="M5 1h4L7 5zM5 17h4l-2-4z" fill="#111"/></svg></button>
    </div>
  </div>
  <footer class="status"><span>Select Objects</span><span>Page: 6</span><span>Object layer: Layout Box Borders</span><span class="c">X: 1 5/16", Y: -23 11/16", Z: 0"</span><span class="c"></span><span class="c"></span></footer>
  </div>
</main>
</body>
</html>
```
FILE: styles.css
```css
* { box-sizing: border-box; }
body { margin: 0; background: #fff; color: #222; font: 8px/12px "Open Sans", "Noto Sans", sans-serif; }
button, select, input { font: inherit; color: inherit; margin: 0; padding: 0; border: 0; background: none; }
h1, h2 { margin: 0; font: 9px/12px Roboto, sans-serif; }
ul { list-style: none; margin: 0; padding: 0; }
svg { display: block; flex: none; }
.defs { width: 0; height: 0; position: absolute; }
.s8 { width: 8px; height: 8px; }
.logo { width: 13px; height: 13px; }

.window { margin: 241px 0; border: 1px solid #4f5b69; border-radius: 5px 5px 0 0; background: #d5e1ed; padding: 0 5px 5px; }
.titlebar { display: flex; align-items: center; gap: 3px; height: 23px; margin: 0 -5px; padding: 3px 7px 0 6px; background: linear-gradient(#bccad9, #d3e0ee); border-radius: 4px 4px 0 0; color: #3c4956; }
.winbtns { margin-left: auto; display: flex; gap: 2px; }
.winbtns button { width: 24px; height: 14px; border: 1px solid #8d9bab; border-radius: 2px; background: #ccd8e5; }
.winbtns svg { width: 22px; height: 12px; }
.body { background: #f0f0f0; }

.menu { display: flex; height: 15px; padding: 1px 6px 0; gap: 12px; background: linear-gradient(#f2f4fa, #dcdff0); border-bottom: 1px solid #c8cad6; font: 9px/13px Roboto, sans-serif; }
.menu a { color: #a3a6b3; text-decoration: none; }

.bar { display: flex; align-items: center; height: 23px; padding-left: 8px; border-bottom: 1px solid #c9c9c9; background: #f0f0f0; }
.bar::before { content: ""; width: 2px; height: 16px; margin-left: -5px; margin-right: 3px; background: repeating-linear-gradient(#bbb 0 1px, transparent 1px 3px); }
.icons { display: flex; }
.icons button, .vicons button { flex: 1; display: flex; align-items: center; justify-content: center; min-width: 0; }
.icons svg, .vicons svg { width: 17px; height: 17px; }
.seven { width: 144px; margin-right: 8px; }
.two { width: 41px; }
.four { width: 84px; margin-left: 9px; }
.ten { width: 205px; }
.many { width: 430px; }
.bar1 .icons + .icons, .bar1 .four { border-left: 1px dotted #bbb; }
.on { border: 1px solid #777; border-radius: 2px; background: #dcdcdc; height: 19px; }
.splits button { flex: none; width: 20px; }
.splits .split { width: 30px; justify-content: flex-start; gap: 1px; padding-left: 2px; }
.split::after { content: ""; border: 3px solid transparent; border-top-color: #222; border-bottom: 0; }
.pageno { border: 1px solid #999; background: #fff; width: 15px; height: 15px; font: 11px/13px "Liberation Sans", sans-serif; }

.sel { position: relative; display: inline-flex; height: 14px; border: 1px solid #8a8a8a; border-radius: 2px; background: linear-gradient(#f4f4f4, #d9d9d9); }
.sel select { appearance: none; width: 100%; padding: 0 2px; line-height: 11px; outline: 0; opacity: 1; }
.sel::after { content: ""; position: absolute; right: 3px; top: 4px; border: 3px solid transparent; border-top: 4px solid #222; border-bottom: 0; pointer-events: none; }
.w60 { width: 60px; margin-right: 1px; }
.w46 { width: 46px; }
.w76 { width: 76px; }
.w101 { width: 101px; }
.w103 { width: 103px; }
.dark { border: 1px solid #333; }

.work { display: flex; }
.dock { width: 36px; display: flex; flex-direction: column; }
.dockhead { height: 15px; display: flex; align-items: center; justify-content: flex-end; gap: 4px; padding-right: 4px; background: #dedede; margin: 0 2px 1px 0; }
.dockbody { flex: 1; border: 1px solid #aaa; border-left: 0; margin-right: 2px; }
.gear { height: 19px; padding-left: 6px; }
.gear svg { width: 14px; height: 12px; }
.center { flex: 942; min-width: 0; }
.browser { flex: 0 0 263px; margin-left: 3px; display: flex; flex-direction: column; }
.tabs { display: flex; height: 18px; align-items: flex-end; padding-left: 3px; }
.browser .tabs { padding-left: 0; }
.tab { display: flex; align-items: center; gap: 5px; height: 17px; padding-left: 5px; border: 1px solid #b5b5b5; border-bottom: 0; background: linear-gradient(#ececec, #d6d6d6); white-space: nowrap; }
.tab.active { height: 18px; background: #fff; padding-left: 8px; }
.tab-a { width: 142px; }
.tab-b { width: 136px; }
.tab-c { width: 93px; }
.tab-d { width: 88px; }
.panelhead { display: flex; align-items: center; gap: 4px; height: 17px; padding: 0 3px; background: #dcdcdc; border: 1px solid #b5b5b5; }
.panelhead span { flex: 1; }
.viewport { position: relative; display: grid; grid-template-columns: 1fr 14px; grid-template-rows: auto 13px; border-bottom: 1px solid #aaa; }
.drawing { width: 100%; height: auto; }
.vscroll, .hscroll { background: #eee; display: flex; justify-content: space-between; align-items: center; }
.vscroll { flex-direction: column; padding: 6px 0 3px; border-right: 1px solid #bbb; }
.hscroll { padding: 0 3px 0 6px; }
.vscroll i, .hscroll i { border: 3px solid transparent; }
.vscroll .up { border-bottom-color: #999; border-top: 0; }
.vscroll .down { border-top-color: #999; border-bottom: 0; }
.hscroll .left { border-right-color: #999; border-left: 0; }
.hscroll .right { border-left-color: #999; border-right: 0; }

.tb text { font: bold 5px "DejaVu Sans Mono", monospace; fill: #1d4576; }
.tb .tbig { font-size: 9px; }
.tb .tsm { font-size: 4px; }
.room text { font: 5px "DejaVu Sans", sans-serif; fill: #9a9a9a; }
.dim text { font: 9px "Liberation Sans", sans-serif; fill: #333; }
.caption text { font: 13px "DejaVu Sans", sans-serif; fill: #24508a; }

.treebox { flex: 1; background: #fff; border: 1px solid #aaa; border-top: 0; padding: 1px 0 0 4px; }
.tree { display: grid; grid-auto-rows: 1fr; height: 343px; font: 9px/13px Roboto, sans-serif; color: #111; }
.tree li { display: flex; align-items: center; gap: 4px; white-space: nowrap; }
.tree .tw { width: 8px; height: 8px; }
.tree .ti { width: 13px; height: 12px; }
.l0 { padding-left: 1px; }
.l1 { padding-left: 16px; }
.l2 { margin-left: 43px; }
.tree .cur { background: linear-gradient(#fafafa, #e4e4e4); }

.side { width: 24px; padding: 7px 1px 0 2px; border-top: 1px dotted #aaa; }
.vicons { display: flex; flex-direction: column; }
.vicons button { width: 21px; min-height: 0; }
.g10 { height: 198px; margin-bottom: 10px; }
.g11 { height: 218px; }

.bar3 { height: 24px; border-bottom: 0; }
.next { display: block; font: 9px/9px "Liberation Sans", sans-serif; }
.next svg { height: 8px; }
.status { display: grid; grid-template-columns: 1fr 176px 78px 198px 226px 78px 15px; height: 14px; line-height: 13px; }
.status span:first-child { grid-column: 2; }
.c { border-left: 1px solid #ddd; padding-left: 3px; }

.dialog { position: absolute; left: 449px; top: 24px; width: 457px; height: 365px; border: 1px solid #2c3a4a; border-radius: 5px 5px 0 0; background: #b9d7ee; padding: 0 5px 5px; display: flex; flex-direction: column; box-shadow: inset 0 0 0 1px #9fdcf2; }
.dtitle { display: flex; align-items: center; gap: 3px; height: 22px; margin: 0 -5px; padding: 3px 6px 0; color: #1c2c3e; background: linear-gradient(#98b8d8, #b3cfea); border-radius: 4px 4px 0 0; }
.close { margin-left: auto; width: 24px; height: 13px; border: 1px solid #6e2a24; border-radius: 2px; background: linear-gradient(#dd8c80, #b83c2e 50%, #cf5a48); }
.close svg { width: 22px; height: 11px; }
.dbody { flex: 1; background: #f0f0f0; padding: 6px 6px 0; display: flex; flex-direction: column; }
.dmain { flex: 1; display: flex; gap: 13px; }
.plist { width: 59px; border: 1px solid #8f959c; background: #fff; font: 9px/13px Roboto, sans-serif; }
.plist li { padding-left: 3px; }
.plist .cur { background: #e9e9e9; }
.fields { flex: 1; }
.row { display: flex; align-items: center; height: 20px; margin-top: -2px; }
.row + .row { margin-top: 0; }
.row label { width: 131px; }
.row .sel { height: 15px; }
.row.sub { padding-left: 27px; }
.row.sub label { width: 104px; }
.off { color: #999; }
.off .sel { border-color: #bbb; background: #f3f3f3; }
.off .sel::after { border-top-color: #999; }
input[type=checkbox] { appearance: none; width: 10px; height: 10px; border: 1px solid #999; background: #fafafa; }
.group { display: flex; align-items: center; gap: 3px; height: 20px; margin: 5px 0 1px; }
.group hr { flex: 1; margin: 0 0 3px 6px; border: 0; border-top: 1px solid #c0c0c0; border-bottom: 1px solid #fff; }
.first { display: flex; align-items: center; gap: 3px; padding-left: 131px; height: 17px; }
.dfoot { display: flex; gap: 6px; height: 32px; padding: 6px 3px 10px 2px; }
.btn { width: 56px; height: 16px; line-height: 13px; border: 1px solid #8a8a8a; border-radius: 2px; background: linear-gradient(#f6f6f6, #dcdcdc); }
.num { width: 63px; margin-right: auto; }
.ok { border: 1px solid #2f9fd0; background: linear-gradient(#eef7fb, #bfe1f0); box-shadow: inset 0 0 0 1px #6fcbea; }
.cursor { position: absolute; left: 347px; top: 202px; width: 28px; height: 28px; }
```
